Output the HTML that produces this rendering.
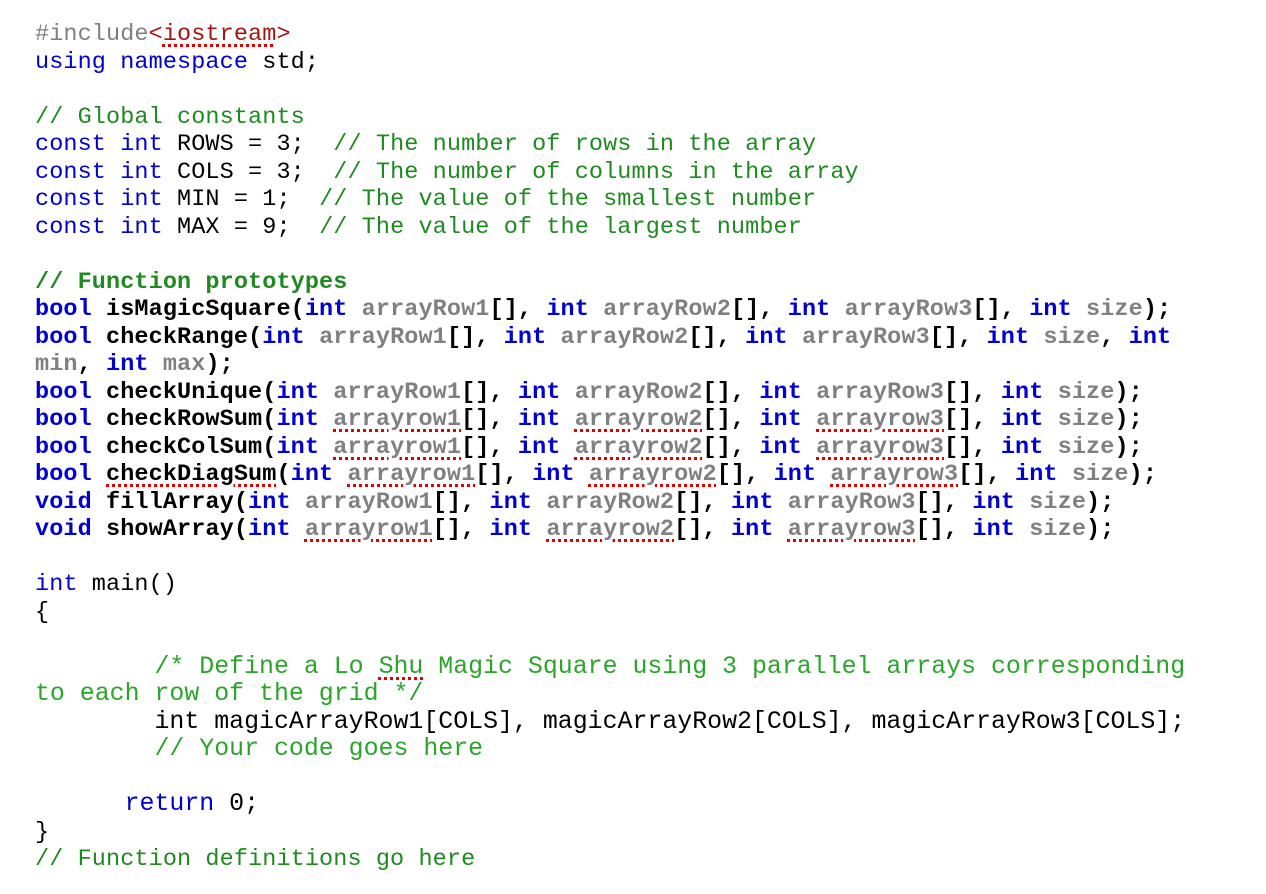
<!DOCTYPE html>
<html><head><meta charset="utf-8"><style>
html,body{margin:0;padding:0;background:#fff;width:1266px;height:894px;overflow:hidden}
pre{margin:0;position:absolute;left:35px;top:21px;font-family:"Liberation Mono",monospace;font-size:23.5px;line-height:27.5px;color:#000;letter-spacing:0.1px}
.k{color:#0000d0}.c{color:#1f8a1f}.c2{color:#2aa52a}.g{color:#808080}.r{color:#a31515}
.b{font-weight:bold}
.big{font-size:24.9px;line-height:27.5px;letter-spacing:0}
.s{text-decoration:underline dotted #e00000;text-decoration-thickness:3px;text-underline-offset:4px}
</style></head><body>
<pre><span class="g">#include</span><span class="r">&lt;<span class="s">iostream</span>&gt;</span>
<span class="k">using namespace</span> std;

<span class="c">// Global constants</span>
<span class="k">const int</span> ROWS = 3;  <span class="c">// The number of rows in the array</span>
<span class="k">const int</span> COLS = 3;  <span class="c">// The number of columns in the array</span>
<span class="k">const int</span> MIN = 1;  <span class="c">// The value of the smallest number</span>
<span class="k">const int</span> MAX = 9;  <span class="c">// The value of the largest number</span>
<span class="b">
<span class="c">// Function prototypes</span>
<span class="k">bool</span> isMagicSquare(<span class="k">int</span> <span class="g">arrayRow1</span>[], <span class="k">int</span> <span class="g">arrayRow2</span>[], <span class="k">int</span> <span class="g">arrayRow3</span>[], <span class="k">int</span> <span class="g">size</span>);
<span class="k">bool</span> checkRange(<span class="k">int</span> <span class="g">arrayRow1</span>[], <span class="k">int</span> <span class="g">arrayRow2</span>[], <span class="k">int</span> <span class="g">arrayRow3</span>[], <span class="k">int</span> <span class="g">size</span>, <span class="k">int</span>
<span class="g">min</span>, <span class="k">int</span> <span class="g">max</span>);
<span class="k">bool</span> checkUnique(<span class="k">int</span> <span class="g">arrayRow1</span>[], <span class="k">int</span> <span class="g">arrayRow2</span>[], <span class="k">int</span> <span class="g">arrayRow3</span>[], <span class="k">int</span> <span class="g">size</span>);
<span class="k">bool</span> checkRowSum(<span class="k">int</span> <span class="g s">arrayrow1</span>[], <span class="k">int</span> <span class="g s">arrayrow2</span>[], <span class="k">int</span> <span class="g s">arrayrow3</span>[], <span class="k">int</span> <span class="g">size</span>);
<span class="k">bool</span> checkColSum(<span class="k">int</span> <span class="g s">arrayrow1</span>[], <span class="k">int</span> <span class="g s">arrayrow2</span>[], <span class="k">int</span> <span class="g s">arrayrow3</span>[], <span class="k">int</span> <span class="g">size</span>);
<span class="k">bool</span> <span class="s">checkDiagSum</span>(<span class="k">int</span> <span class="g s">arrayrow1</span>[], <span class="k">int</span> <span class="g s">arrayrow2</span>[], <span class="k">int</span> <span class="g s">arrayrow3</span>[], <span class="k">int</span> <span class="g">size</span>);
<span class="k">void</span> fillArray(<span class="k">int</span> <span class="g">arrayRow1</span>[], <span class="k">int</span> <span class="g">arrayRow2</span>[], <span class="k">int</span> <span class="g">arrayRow3</span>[], <span class="k">int</span> <span class="g">size</span>);
<span class="k">void</span> showArray(<span class="k">int</span> <span class="g s">arrayrow1</span>[], <span class="k">int</span> <span class="g s">arrayrow2</span>[], <span class="k">int</span> <span class="g s">arrayrow3</span>[], <span class="k">int</span> <span class="g">size</span>);</span>

<span class="k">int</span> main()
{
<span class="big">
        <span class="c2">/* Define a Lo <span class="s">Shu</span> Magic Square using 3 parallel arrays corresponding
to each row of the grid */</span>
        int magicArrayRow1[COLS], magicArrayRow2[COLS], magicArrayRow3[COLS];
        <span class="c2">// Your code goes here</span>

      <span class="k">return</span> 0;</span>
}
<span class="c">// Function definitions go here</span></pre>
</body></html>
